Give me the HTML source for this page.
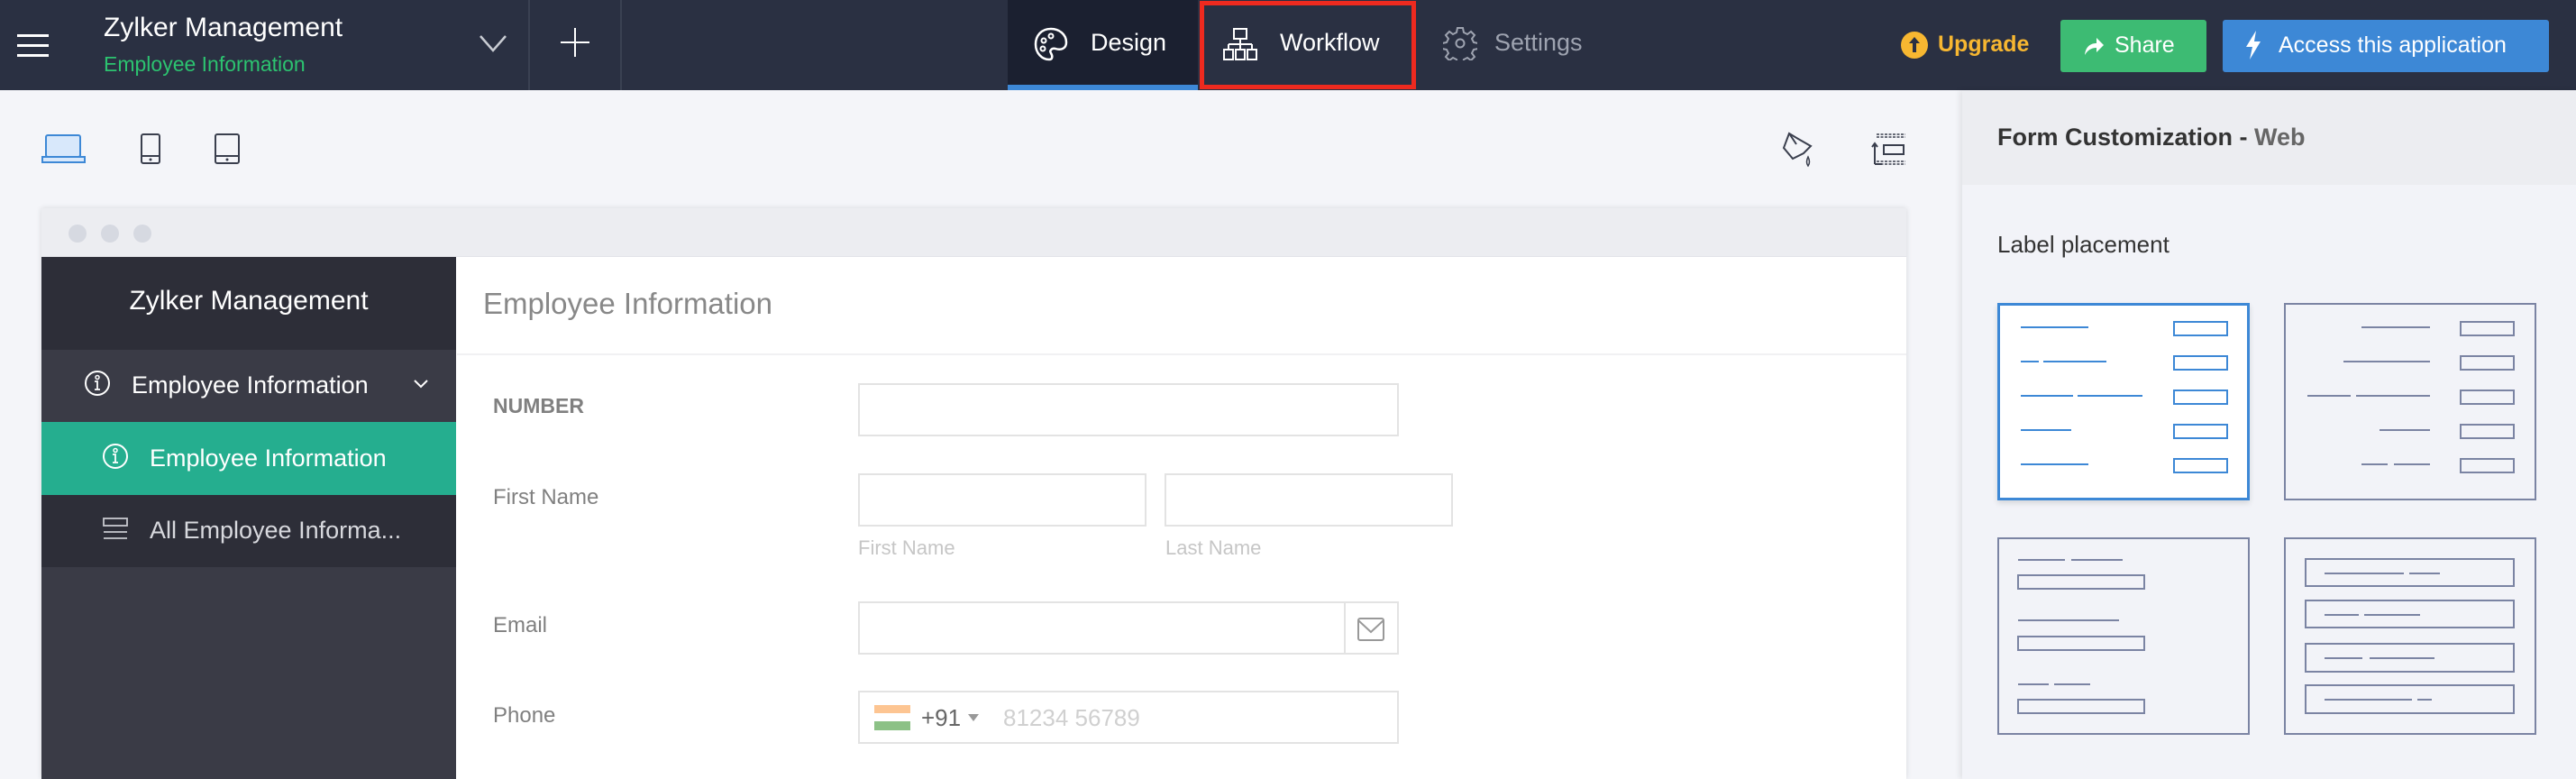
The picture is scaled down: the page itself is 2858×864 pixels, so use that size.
<!DOCTYPE html>
<html><head><meta charset="utf-8"><style>
*{margin:0;padding:0;box-sizing:border-box}
body{width:2858px;height:864px;overflow:hidden;background:#f4f5f9;font-family:"Liberation Sans",sans-serif;position:relative}
.a{position:absolute}
.hdr{left:0;top:0;width:2858px;height:100px;background:#2a3042}
.t{white-space:nowrap}
.lbl{color:#808080;font-size:24px;left:547px}
.box{border:2px solid #e3e3e3;background:#fff}
</style></head><body>
<div class="a hdr"></div>
<!-- hamburger -->
<div class="a" style="left:19px;top:38px;width:35px;height:3px;background:#fff"></div>
<div class="a" style="left:19px;top:49px;width:35px;height:3px;background:#fff"></div>
<div class="a" style="left:19px;top:60px;width:35px;height:3px;background:#fff"></div>
<div class="a t" style="left:115px;top:14px;color:#fff;font-size:30px">Zylker Management</div>
<div class="a t" style="left:115px;top:58px;color:#2cc370;font-size:23px">Employee Information</div>
<svg class="a" style="left:530px;top:36px" width="34" height="24"><path d="M3 4 L17 20 L31 4" stroke="#c9ccd3" stroke-width="2.5" fill="none"/></svg>
<div class="a" style="left:586px;top:0;width:2px;height:100px;background:#3a4152"></div>
<div class="a" style="left:637px;top:31px;width:2px;height:32px;background:#fff"></div>
<div class="a" style="left:622px;top:46px;width:32px;height:2px;background:#fff"></div>
<div class="a" style="left:688px;top:0;width:2px;height:100px;background:#3a4152"></div>
<!-- Design tab -->
<div class="a" style="left:1118px;top:0;width:211px;height:100px;background:#1b2030"></div>
<div class="a" style="left:1118px;top:94px;width:211px;height:6px;background:#3d88d6"></div>
<svg class="a" style="left:1146px;top:29px" width="40" height="40" viewBox="0 0 40 40"><path d="M20 3 C9 3 3 11 3 20 C3 30 10 37 18 37 C22 37 22 33 20 30 C18 27 21 24 25 25 C31 27 37 25 37 18 C37 9 29 3 20 3Z" stroke="#fff" stroke-width="2.5" fill="none"/><circle cx="12" cy="16" r="2.5" stroke="#fff" stroke-width="2" fill="none"/><circle cx="20" cy="11" r="2.5" stroke="#fff" stroke-width="2" fill="none"/><circle cx="11" cy="25" r="2.5" stroke="#fff" stroke-width="2" fill="none"/></svg>
<div class="a t" style="left:1210px;top:32px;color:#fff;font-size:27px">Design</div>
<!-- Workflow -->
<div class="a" style="left:1331px;top:1px;width:240px;height:98px;border:5px solid #ee2a1f"></div>
<svg class="a" style="left:1357px;top:30px" width="38" height="38" viewBox="0 0 38 38"><rect x="12" y="2" width="14" height="11" stroke="#fff" stroke-width="2" fill="none"/><path d="M19 13 V19 M6 19 H32 M6 19 V25 M19 19 V25 M32 19 V25" stroke="#fff" stroke-width="2" fill="none"/><rect x="1" y="25" width="10" height="11" stroke="#fff" stroke-width="2" fill="none"/><rect x="14" y="25" width="10" height="11" stroke="#fff" stroke-width="2" fill="none"/><rect x="27" y="25" width="10" height="11" stroke="#fff" stroke-width="2" fill="none"/></svg>
<div class="a t" style="left:1420px;top:32px;color:#fff;font-size:27px">Workflow</div>
<svg class="a" style="left:1601px;top:29px" width="38" height="38" viewBox="0 0 38 38"><path d="M16 2h6l1 5 4 2 4-3 4 4-3 4 2 4 5 1v6l-5 1-2 4 3 4-4 4-4-3-4 2-1 5h-6l-1-5-4-2-4 3-4-4 3-4-2-4-5-1v-6l5-1 2-4-3-4 4-4 4 3 4-2z" stroke="#9ea3b0" stroke-width="2" fill="none"/><circle cx="19" cy="19" r="4.5" stroke="#9ea3b0" stroke-width="2" fill="none"/></svg>
<div class="a t" style="left:1658px;top:32px;color:#9ea3b0;font-size:27px">Settings</div>
<!-- right header -->
<svg class="a" style="left:2108px;top:34px" width="32" height="32"><circle cx="16" cy="16" r="15" fill="#f7b731"/><path d="M16 7 L10 14 H14 V24 H18 V14 H22Z" fill="#2a3042"/></svg>
<div class="a t" style="left:2150px;top:35px;color:#f7b731;font-size:25px;font-weight:bold">Upgrade</div>
<div class="a" style="left:2286px;top:22px;width:162px;height:58px;background:#3dbb73;border-radius:3px"></div>
<svg class="a" style="left:2310px;top:38px" width="26" height="26"><path d="M3 23 C4 14 9 10 16 10 V4 L24 12 L16 20 V15 C10 15 6 18 3 23Z" fill="#fff"/></svg>
<div class="a t" style="left:2346px;top:36px;color:#fff;font-size:25px">Share</div>
<div class="a" style="left:2466px;top:22px;width:362px;height:58px;background:#3d88d6;border-radius:3px"></div>
<svg class="a" style="left:2490px;top:33px" width="20" height="34"><path d="M13 1 L2 19 H9 L6 33 L18 13 H11Z" fill="#fff"/></svg>
<div class="a t" style="left:2528px;top:36px;color:#fff;font-size:25px">Access this application</div>
<!-- device icons -->
<svg class="a" style="left:46px;top:148px" width="50" height="34"><rect x="5" y="2" width="38" height="24" rx="2" fill="#d8e8fb" stroke="#3d88d6" stroke-width="2"/><rect x="1" y="26" width="47" height="6" fill="#d8e8fb" stroke="#3d88d6" stroke-width="2"/></svg>
<svg class="a" style="left:155px;top:148px" width="24" height="34"><rect x="2" y="1" width="20" height="32" rx="2" fill="none" stroke="#3a3f4e" stroke-width="2"/><path d="M2 25 H22" stroke="#3a3f4e" stroke-width="2"/><circle cx="12" cy="29" r="1.5" fill="#3a3f4e"/></svg>
<svg class="a" style="left:237px;top:148px" width="30" height="34"><rect x="2" y="1" width="26" height="32" rx="2" fill="none" stroke="#3a3f4e" stroke-width="2"/><path d="M2 25 H28" stroke="#3a3f4e" stroke-width="2"/><circle cx="15" cy="29" r="1.5" fill="#3a3f4e"/></svg>
<svg class="a" style="left:1975px;top:146px" width="40" height="42"><path d="M10 2 L4 18 L14 30 L26 24 L34 16 L20 8 Z" fill="none" stroke="#3a3f4e" stroke-width="2"/><path d="M10 2 L18 14" stroke="#3a3f4e" stroke-width="2"/><path d="M31 28 Q28 34 31 38 Q34 34 31 28Z" fill="none" stroke="#3a3f4e" stroke-width="1.5"/></svg>
<svg class="a" style="left:2076px;top:148px" width="40" height="36"><path d="M6 1 H38 M6 4 H38 M6 31 H38 M6 34 H38" stroke="#3a3f4e" stroke-width="1.5" stroke-dasharray="3 1.5"/><rect x="14" y="13" width="22" height="10" fill="none" stroke="#3a3f4e" stroke-width="2"/><path d="M4 34 V12 M1 15 L4 11 L7 15 M4 34 H12" stroke="#3a3f4e" stroke-width="2" fill="none"/></svg>
<!-- preview window -->
<div class="a" style="left:46px;top:231px;width:2069px;height:633px;background:#fff;box-shadow:0 0 6px rgba(0,0,0,.12)"></div>
<div class="a" style="left:46px;top:231px;width:2069px;height:54px;background:#ecedf1;border-bottom:1px solid #e2e3e8"></div>
<div class="a" style="left:76px;top:249px;width:20px;height:20px;border-radius:50%;background:#d6d9e1"></div>
<div class="a" style="left:112px;top:249px;width:20px;height:20px;border-radius:50%;background:#d6d9e1"></div>
<div class="a" style="left:148px;top:249px;width:20px;height:20px;border-radius:50%;background:#d6d9e1"></div>
<div class="a" style="left:46px;top:285px;width:460px;height:579px;background:#3a3b46"></div>
<div class="a" style="left:46px;top:285px;width:460px;height:103px;background:#2d2e38"></div>
<div class="a t" style="left:46px;top:317px;width:460px;text-align:center;color:#fff;font-size:30px">Zylker Management</div>
<div class="a" style="left:46px;top:388px;width:460px;height:80px;background:#3a3b46"></div>
<svg class="a" style="left:93px;top:410px" width="30" height="30"><circle cx="15" cy="15" r="13" fill="none" stroke="#fff" stroke-width="2"/><circle cx="15" cy="8.5" r="2" fill="none" stroke="#fff" stroke-width="1.5"/><path d="M12 13 H15 V22 M12 22 H18" stroke="#fff" stroke-width="1.8" fill="none"/></svg>
<div class="a t" style="left:146px;top:412px;color:#fff;font-size:27px">Employee Information</div>
<svg class="a" style="left:458px;top:420px" width="18" height="12"><path d="M2 2 L9 9 L16 2" stroke="#fff" stroke-width="2" fill="none"/></svg>
<div class="a" style="left:46px;top:468px;width:460px;height:81px;background:#25ae8f"></div>
<svg class="a" style="left:113px;top:491px" width="30" height="30"><circle cx="15" cy="15" r="13" fill="none" stroke="#fff" stroke-width="2"/><circle cx="15" cy="8.5" r="2" fill="none" stroke="#fff" stroke-width="1.5"/><path d="M12 13 H15 V22 M12 22 H18" stroke="#fff" stroke-width="1.8" fill="none"/></svg>
<div class="a t" style="left:166px;top:493px;color:#fff;font-size:27px">Employee Information</div>
<div class="a" style="left:46px;top:549px;width:460px;height:80px;background:#2d2e38"></div>
<svg class="a" style="left:113px;top:573px" width="30" height="30"><rect x="2" y="2" width="26" height="8" fill="none" stroke="#c8c9cf" stroke-width="1.8"/><path d="M2 17 H28 M2 24 H28" stroke="#c8c9cf" stroke-width="1.8"/></svg>
<div class="a t" style="left:166px;top:573px;color:#d8d9de;font-size:27px">All Employee Informa...</div>
<!-- form -->
<div class="a t" style="left:536px;top:318px;color:#888;font-size:33px">Employee Information</div>
<div class="a" style="left:507px;top:392px;width:1608px;height:2px;background:#f1f1f3"></div>
<div class="a t lbl" style="top:437px;font-weight:bold;font-size:23px">NUMBER</div>
<div class="a box" style="left:952px;top:425px;width:600px;height:59px"></div>
<div class="a t lbl" style="top:538px">First Name</div>
<div class="a box" style="left:952px;top:525px;width:320px;height:59px"></div>
<div class="a box" style="left:1292px;top:525px;width:320px;height:59px"></div>
<div class="a t" style="left:952px;top:595px;color:#c6c6c6;font-size:22px">First Name</div>
<div class="a t" style="left:1293px;top:595px;color:#c6c6c6;font-size:22px">Last Name</div>
<div class="a t lbl" style="top:680px">Email</div>
<div class="a box" style="left:952px;top:667px;width:600px;height:59px"></div>
<div class="a" style="left:1491px;top:668px;width:2px;height:57px;background:#e3e3e3"></div>
<svg class="a" style="left:1506px;top:685px" width="30" height="26"><rect x="1" y="1" width="28" height="24" rx="2" fill="none" stroke="#999" stroke-width="2"/><path d="M1 3 L15 16 L29 3" stroke="#999" stroke-width="2" fill="none"/></svg>
<div class="a t lbl" style="top:780px">Phone</div>
<div class="a box" style="left:952px;top:766px;width:600px;height:59px"></div>
<div class="a" style="left:970px;top:782px;width:40px;height:9px;background:#fdc592"></div>
<div class="a" style="left:970px;top:791px;width:40px;height:9px;background:#fff"></div>
<div class="a" style="left:970px;top:800px;width:40px;height:10px;background:#8cc186"></div>
<div class="a t" style="left:1022px;top:781px;color:#666;font-size:26px">+91</div>
<div class="a" style="left:1074px;top:792px;border-left:6px solid transparent;border-right:6px solid transparent;border-top:8px solid #999"></div>
<div class="a t" style="left:1113px;top:781px;color:#d0d0d0;font-size:26px">81234 56789</div>
<!-- right panel -->
<div class="a" style="left:2177px;top:100px;width:681px;height:764px;background:#f2f3f8;box-shadow:-3px 0 6px rgba(0,0,0,.08)"></div>
<div class="a" style="left:2177px;top:100px;width:681px;height:105px;background:#ecedf1"></div>
<div class="a t" style="left:2216px;top:137px;color:#333;font-size:27px;font-weight:bold">Form Customization - <span style="color:#666">Web</span></div>
<div class="a t" style="left:2216px;top:256px;color:#333;font-size:26px">Label placement</div>
<svg class="a" style="left:2216px;top:336px;box-shadow:0 3px 6px rgba(0,0,0,.12)" width="280" height="219" viewBox="0 0 280 219"><rect x="1.5" y="1.5" width="277" height="216" fill="#fff" stroke="#3d88d6" stroke-width="3"/><g stroke="#3d88d6" stroke-width="2" fill="none"><path d="M26 27H101M26 65H46M51 65H121M26 103H84M89 103H161M26 141H82M26 179H101"/><rect x="196" y="21" width="59" height="15"/><rect x="196" y="59" width="59" height="15"/><rect x="196" y="97" width="59" height="15"/><rect x="196" y="135" width="59" height="15"/><rect x="196" y="173" width="59" height="15"/></g></svg>
<svg class="a" style="left:2534px;top:336px" width="280" height="219" viewBox="0 0 280 219"><g stroke="#7b84a3" stroke-width="2" fill="none"><rect x="1" y="1" width="278" height="217"/><path d="M86 27H162M66 65H162M26 103H74M80 103H162M106 141H162M86 179H115M122 179H162"/><rect x="196" y="21" width="59" height="15"/><rect x="196" y="59" width="59" height="15"/><rect x="196" y="97" width="59" height="15"/><rect x="196" y="135" width="59" height="15"/><rect x="196" y="173" width="59" height="15"/></g></svg>
<svg class="a" style="left:2216px;top:596px" width="280" height="219" viewBox="0 0 280 219"><g stroke="#7b84a3" stroke-width="2" fill="none"><rect x="1" y="1" width="278" height="217"/><path d="M23 25H75M82 25H139M23 92H135M23 163H57M63 163H103"/><rect x="23" y="42" width="140" height="15"/><rect x="23" y="110" width="140" height="15"/><rect x="23" y="180" width="140" height="15"/></g></svg>
<svg class="a" style="left:2534px;top:596px" width="280" height="219" viewBox="0 0 280 219"><g stroke="#7b84a3" stroke-width="2" fill="none"><rect x="1" y="1" width="278" height="217"/><rect x="24" y="24" width="231" height="30"/><rect x="24" y="70" width="231" height="30"/><rect x="24" y="118" width="231" height="31"/><rect x="24" y="164" width="231" height="31"/><path d="M45 40H133M139 40H173M45 86H83M89 86H151M45 134H87M95 134H167M45 180H142M148 180H164"/></g></svg>
</body></html>
